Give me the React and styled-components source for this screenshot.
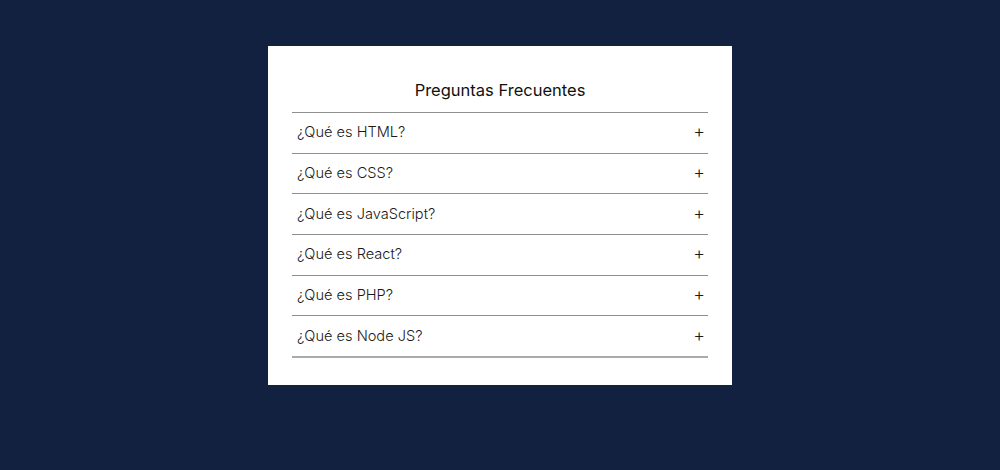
import React, { useState } from 'react'
import styled, { createGlobalStyle } from 'styled-components'

const GlobalStyle = createGlobalStyle`
    html, body {
        margin: 0;
        padding: 0;
        background: #11213f;
        font-family: "Inter", "Noto Sans", sans-serif;
    }
`

const Page = styled.div`
    min-height: 470px;
    display: flex;
    justify-content: center;
    align-items: flex-start;
    padding-top: 46px;
    box-sizing: border-box;
`

const Card = styled.div`
    width: 464px;
    background: #ffffff;
    padding: 0 24px 27px 24px;
    box-sizing: border-box;
`

const Title = styled.h2`
    margin: 0;
    height: 67px;
    display: flex;
    align-items: flex-end;
    justify-content: center;
    padding-bottom: 12px;
    box-sizing: border-box;
    font-size: 16.5px;
    font-weight: 400;
    color: #111;
    border-bottom: 1px solid #8f8f8f;
`

const Item = styled.div`
    border-bottom: ${props => (props.last ? '2px solid #aaaaaa' : '1px solid #8f8f8f')};
`

const Question = styled.button`
    width: 100%;
    height: 39.7px;
    display: flex;
    align-items: center;
    justify-content: space-between;
    padding: 0 3px 1px 5px;
    border: none;
    background: transparent;
    cursor: pointer;
    font-family: inherit;
    font-size: 14.6px;
    font-weight: 300;
    color: #1a1a1a;
`

const Sign = styled.span`
    font-size: 18px;
    font-weight: 300;
    line-height: 1;
    color: #1a1a1a;
`

const Answer = styled.div`
    padding: 0 5px 12px;
    font-size: 14px;
    font-weight: 300;
    color: #444;
`

const faqs = [
    { q: '¿Qué es HTML?', a: 'HTML es el lenguaje de marcado para crear páginas web.' },
    { q: '¿Qué es CSS?', a: 'CSS es el lenguaje de estilos de la web.' },
    { q: '¿Qué es JavaScript?', a: 'JavaScript es el lenguaje de programación de la web.' },
    { q: '¿Qué es React?', a: 'React es una librería para construir interfaces.' },
    { q: '¿Qué es PHP?', a: 'PHP es un lenguaje del lado del servidor.' },
    { q: '¿Qué es Node JS?', a: 'Node JS es un entorno para ejecutar JavaScript en el servidor.' },
]

export default function App() {
    const [open, setOpen] = useState(null)

    return (
        <Page>
            <GlobalStyle />
            <Card>
                <Title>Preguntas Frecuentes</Title>
                {faqs.map((item, i) => (
                    <Item key={item.q} last={i === faqs.length - 1}>
                        <Question onClick={() => setOpen(open === i ? null : i)}>
                            <span>{item.q}</span>
                            <Sign>{open === i ? '−' : '+'}</Sign>
                        </Question>
                        {open === i && <Answer>{item.a}</Answer>}
                    </Item>
                ))}
            </Card>
        </Page>
    )
}
